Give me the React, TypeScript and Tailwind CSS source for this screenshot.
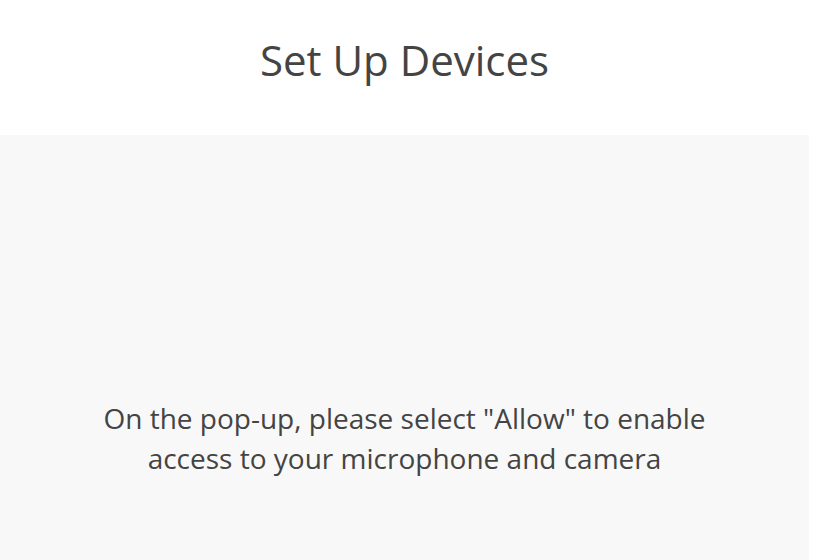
export default function App() {
  return (
    <div className="h-[560px] w-[840px] overflow-hidden bg-white" style={{ fontFamily: '"Open Sans", sans-serif' }}>
      <div className="w-[809px]">
        <div className="flex h-[135px] items-start justify-center pt-[31px]">
          <h1 className="text-[42px] leading-[57px] text-[#444444]">Set Up Devices</h1>
        </div>
        <div className="flex h-[425px] flex-col items-center bg-[#f8f8f8] pt-[263px]">
          <p className="text-center text-[28px] leading-[40px] text-[#444444]">
            On the pop-up, please select "Allow" to enable
            <br />
            access to your microphone and camera
          </p>
        </div>
      </div>
    </div>
  )
}
